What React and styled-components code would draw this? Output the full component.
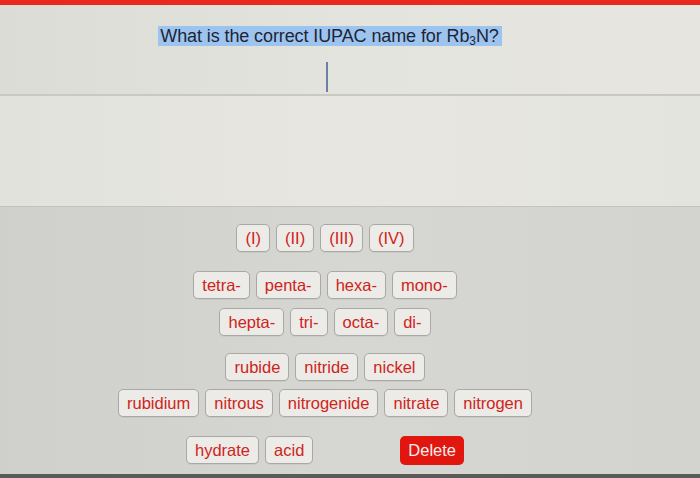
import React from 'react';
import styled, { createGlobalStyle } from 'styled-components';

const Global = createGlobalStyle`
  html, body {
    margin: 0;
    padding: 0;
    background: #d4d5d0;
  }
  body {
    font-family: 'Liberation Sans', Arial, sans-serif;
  }
`;

const Screen = styled.div`
  width: 700px;
  height: 478px;
  overflow: hidden;
  display: flex;
  flex-direction: column;
  background: #d4d5d0;
`;

const TopBar = styled.div`
  height: 5px;
  background: #e8291c;
`;

const QuestionArea = styled.div`
  height: 89px;
  background: linear-gradient(90deg, #dcdcd6 0%, #e4e4de 50%, #e6e5e0 100%);
  border-bottom: 2px solid #c9c9c4;
  display: flex;
  flex-direction: column;
  align-items: center;
  padding-right: 40px;
`;

const Question = styled.div`
  margin-top: 21px;
  background: #9dc4ef;
  color: #1e2436;
  font-size: 18px;
  line-height: 20px;
  padding: 0 3px 0 2px;
  letter-spacing: -0.1px;

  sub {
    font-size: 12px;
    vertical-align: -3px;
    line-height: 0;
  }
`;

const Cursor = styled.div`
  margin-top: 16px;
  margin-right: 6px;
  width: 2px;
  height: 30px;
  background: #6c7fa4;
`;

const AnswerArea = styled.div`
  height: 110px;
  background: linear-gradient(90deg, #e2e2dc 0%, #e7e6e1 50%, #e4e4df 100%);
  border-bottom: 1px solid #c3c4bf;
`;

const Palette = styled.div`
  flex: 1;
  background: linear-gradient(90deg, #cfd0cb 0%, #d6d7d2 50%, #d3d4cf 100%);
  display: flex;
  flex-direction: column;
  align-items: center;
  padding: 17px 50px 0 0;
  border-bottom: 4px solid #5a5a58;
`;

const Row = styled.div`
  display: flex;
  gap: 6px;
  margin-top: ${p => p.$top || 0}px;
`;

const BottomRow = styled.div`
  display: flex;
  justify-content: space-between;
  width: 278px;
  margin-top: 19px;
`;

const Chip = styled.div`
  height: 28px;
  box-sizing: border-box;
  padding: 0 8px;
  display: flex;
  align-items: center;
  border: 1px solid #a8a9a4;
  border-radius: 5px;
  background: #ecebe7;
  color: #cf241b;
  font-size: 16.5px;
  box-shadow: 0 1px 0 rgba(0, 0, 0, 0.05);
`;

const Delete = styled.div`
  height: 29px;
  box-sizing: border-box;
  padding: 0 8px;
  display: flex;
  align-items: center;
  border-radius: 5px;
  background: #e1160f;
  color: #f6eeee;
  font-size: 16.5px;
`;

const rows = [
  { top: 0, items: ['(I)', '(II)', '(III)', '(IV)'] },
  { top: 19, items: ['tetra-', 'penta-', 'hexa-', 'mono-'] },
  { top: 9, items: ['hepta-', 'tri-', 'octa-', 'di-'] },
  { top: 17, items: ['rubide', 'nitride', 'nickel'] },
  { top: 8, items: ['rubidium', 'nitrous', 'nitrogenide', 'nitrate', 'nitrogen'] },
];

export default function App() {
  return (
    <Screen>
      <Global />
      <TopBar />
      <QuestionArea>
        <Question>
          What is the correct IUPAC name for Rb<sub>3</sub>N?
        </Question>
        <Cursor />
      </QuestionArea>
      <AnswerArea />
      <Palette>
        {rows.map((r, i) => (
          <Row key={i} $top={r.top}>
            {r.items.map(t => (
              <Chip key={t}>{t}</Chip>
            ))}
          </Row>
        ))}
        <BottomRow>
          <Row>
            <Chip>hydrate</Chip>
            <Chip>acid</Chip>
          </Row>
          <Delete>Delete</Delete>
        </BottomRow>
      </Palette>
    </Screen>
  );
}
